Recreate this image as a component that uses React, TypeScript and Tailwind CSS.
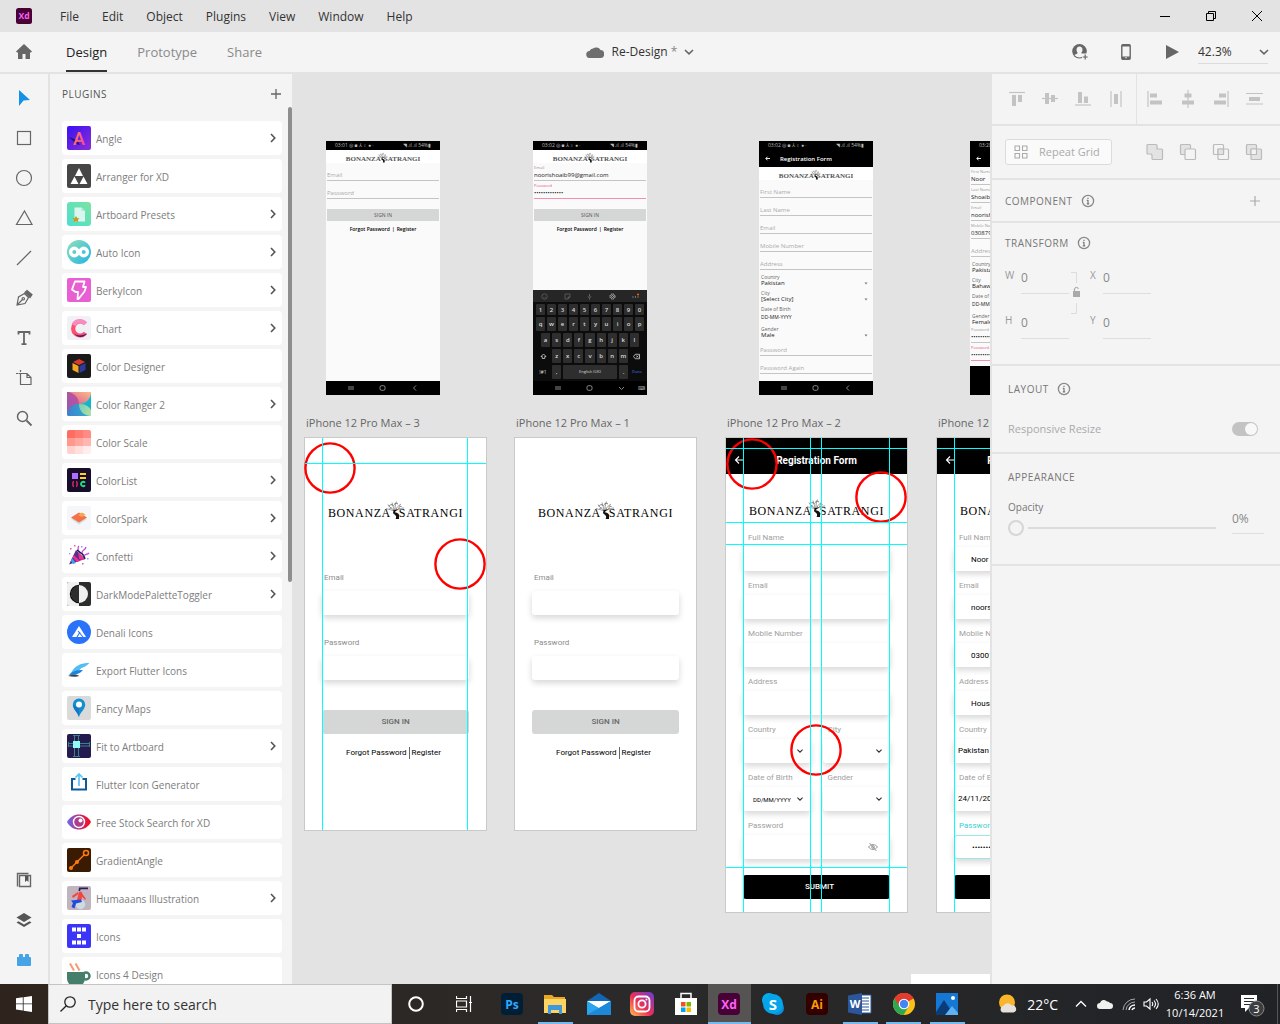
import { useId, useState } from 'react'
import type { ReactNode } from 'react'

const MENU = ['File', 'Edit', 'Object', 'Plugins', 'View', 'Window', 'Help']
const TABS = ['Design', 'Prototype', 'Share']

function Svg({ size = 24, box = 24, children }: { size?: number; box?: number; children: ReactNode }) {
  return (
    <svg width={size} height={size} viewBox={`0 0 ${box} ${box}`} fill="none" aria-hidden="true" className="shrink-0">
      {children}
    </svg>
  )
}

function Chevron({ className = '' }: { className?: string }) {
  return (
    <svg width="10" height="10" viewBox="0 0 10 10" fill="none" stroke="currentColor" strokeWidth="1.600" className={className} aria-hidden="true">
      <path d="M1 3l4 3.800L9 3" />
    </svg>
  )
}

/* ---------- plugin list ---------- */

interface Plugin {
  name: string
  more?: boolean
  icon: ReactNode
}

const PLUGINS: Plugin[] = [
  {
    name: 'Angle',
    more: true,
    icon: (
      <>
        <defs>
          <linearGradient id="angleBg" x1="0" y1="0" x2="1" y2="1">
            <stop stopColor="#3a10f5" />
            <stop offset="1" stopColor="#8b2fd6" />
          </linearGradient>
          <linearGradient id="angleA" x1="0" y1="0" x2="1" y2="1">
            <stop stopColor="#ff8a5c" />
            <stop offset="1" stopColor="#ff3f8e" />
          </linearGradient>
        </defs>
        <rect width="24" height="24" rx="2" fill="url(#angleBg)" />
        <path d="M2 11l8 3 3 5-4-1z" fill="#24107e" />
        <text x="12" y="18.500" textAnchor="middle" fontFamily="Roboto, sans-serif" fontSize="18" fontWeight="500" fill="url(#angleA)">A</text>
      </>
    ),
  },
  {
    name: 'Arranger for XD',
    icon: (
      <>
        <rect width="24" height="24" rx="2" fill="#464646" />
        <path d="M12 4l4 8H8zM7.500 12.500l4 7.500h-8zM16.500 12.500l4 7.500h-8z" fill="#fff" />
      </>
    ),
  },
  {
    name: 'Artboard Presets',
    more: true,
    icon: (
      <>
        <defs>
          <linearGradient id="presetBg" x1="1" y1="0" x2="0" y2="1">
            <stop stopColor="#7be3a0" />
            <stop offset="1" stopColor="#4cdfd0" />
          </linearGradient>
        </defs>
        <rect width="24" height="24" rx="3" fill="url(#presetBg)" />
        <path d="M7.500 5.500h7l3.500 3.500v10.500H7.500z" fill="#d9f7ee" />
        <path d="M14.500 5.500V9H18z" fill="#a9e8d6" />
        <path d="M9 14l1.200 2 2.300.4-1.600 1.600.3 2.200L9 19.200l-2.200 1 .3-2.200-1.600-1.600 2.300-.4z" fill="#c79a28" />
      </>
    ),
  },
  {
    name: 'Auto Icon',
    more: true,
    icon: (
      <>
        <defs>
          <linearGradient id="autoBg" x1="0" y1="0" x2="1" y2="1">
            <stop stopColor="#8fe0b8" />
            <stop offset="1" stopColor="#22b4e6" />
          </linearGradient>
        </defs>
        <circle cx="12" cy="12" r="12" fill="url(#autoBg)" />
        <circle cx="7.300" cy="12" r="3.700" stroke="#fff" strokeWidth="3.400" />
        <circle cx="16.700" cy="12" r="3.700" stroke="#fff" strokeWidth="3.400" />
      </>
    ),
  },
  {
    name: 'BerkyIcon',
    more: true,
    icon: (
      <>
        <rect width="24" height="24" rx="2" fill="#e85fd3" />
        <path d="M8 3.500h9.500L16 9h3l-1.500 4.500-6 7.500h-1l.5-7H8.500L5 11.500z" stroke="#fff" strokeWidth="1.800" strokeLinejoin="round" />
      </>
    ),
  },
  {
    name: 'Chart',
    more: true,
    icon: (
      <>
        <rect width="24" height="24" rx="3" fill="#eff1f4" />
        <path d="M18 7.500A7 7 0 1 0 18.500 17" stroke="#ff4f70" strokeWidth="4.200" />
        <path d="M18.500 8A7 7 0 0 0 6.500 9" stroke="#f78cbf" strokeWidth="4.200" />
        <path d="M7 17.500c3 2.500 8 2.500 13 0-3 4-9 5-13 0z" fill="#3d1a78" />
      </>
    ),
  },
  {
    name: 'Color Designer',
    icon: (
      <>
        <rect width="24" height="24" rx="2" fill="#1a1a1a" />
        <path d="M12 5l6 3-6 3-6-3z" fill="#d63a28" />
        <path d="M5.500 9l6 3v7l-6-3z" fill="#f5a623" />
        <path d="M18.500 9l-6 3v7l6-3z" fill="#2b3a9c" />
      </>
    ),
  },
  {
    name: 'Color Ranger 2',
    more: true,
    icon: (
      <>
        <defs>
          <linearGradient id="rangerTop" x1="0" y1="1" x2="1" y2="0">
            <stop stopColor="#e0568a" />
            <stop offset="1" stopColor="#f8bd8c" />
          </linearGradient>
          <linearGradient id="rangerLeft" x1="0" y1="1" x2="1" y2="0">
            <stop stopColor="#8f5bb0" />
            <stop offset="1" stopColor="#c9509a" />
          </linearGradient>
          <linearGradient id="rangerBottom">
            <stop stopColor="#3f7fd0" />
            <stop offset="1" stopColor="#2fb3c9" />
          </linearGradient>
          <linearGradient id="rangerRight" x1="0" y1="0" x2="1" y2="1">
            <stop stopColor="#5cc9c0" />
            <stop offset="1" stopColor="#b9e0a0" />
          </linearGradient>
        </defs>
        <rect width="24" height="24" rx="2" fill="#12b6cc" />
        <path d="M0 0h12v12C6 12 1 17 0 24z" fill="url(#rangerLeft)" />
        <path d="M2 0h22c0 7-5 12-12 12C12 6 8 2 2 0z" fill="url(#rangerTop)" />
        <path d="M0 22c1-6 6-10 12-10 0 6 4 11 12 12H2a2 2 0 0 1-2-2z" fill="url(#rangerBottom)" />
        <path d="M12 12c6 0 9-3 12-8v20c-7 0-12-5-12-12z" fill="url(#rangerRight)" />
        <path d="M24 4v14c-3-5-7-6-12-6 6 0 9-3 12-8z" fill="#12b6cc" />
      </>
    ),
  },
  {
    name: 'Color Scale',
    icon: (
      <>
        <path d="M0 2a2 2 0 0 1 2-2h6v8H0z" fill="#ff6c60" />
        <path d="M8 0h8v8H8z" fill="#ff7c72" />
        <path d="M16 0h6a2 2 0 0 1 2 2v6h-8z" fill="#ff8b82" />
        <path d="M0 8h8v8H0z" fill="#ff9990" />
        <path d="M8 8h8v8H8z" fill="#ffa8a0" />
        <path d="M16 8h8v8h-8z" fill="#ffb6b0" />
        <path d="M0 16h8v8H2a2 2 0 0 1-2-2z" fill="#ffd2ce" />
        <path d="M8 16h8v8H8z" fill="#ffe0de" />
        <path d="M16 16h8v6a2 2 0 0 1-2 2h-6z" fill="#ffeeed" />
      </>
    ),
  },
  {
    name: 'ColorList',
    more: true,
    icon: (
      <>
        <rect width="24" height="24" rx="2" fill="#180e2b" />
        <path d="M5 5h6v6H5z" fill="#b06cff" />
        <path d="M13 5h6v2h-6zM13 9h6v2h-6z" fill="#ffd21f" />
        <path d="M7 13.500c-1.500 0-1.500 5 0 5M9 13.500c1.500 0 1.500 5 0 5" stroke="#d02a5c" strokeWidth="1.500" />
        <path d="M18 14.700a2.200 2.200 0 1 0 0 2.600" stroke="#21e27c" strokeWidth="1.900" />
      </>
    ),
  },
  {
    name: 'ColorSpark',
    more: true,
    icon: (
      <>
        <rect width="24" height="24" rx="2" fill="#f4f6fa" />
        <path d="M4 13l8-4 8 4-8 5.500z" fill="#d9dde0" />
        <path d="M4 11.500l8-5 8 5-8 5z" fill="#f4704a" />
        <path d="M11 9l4-2.500 3.500 2L15 11z" fill="#f5a94a" />
      </>
    ),
  },
  {
    name: 'Confetti',
    more: true,
    icon: (
      <>
        <path d="M9 6l9 9L2 20.500z" fill="#5b2a8e" />
        <path d="M7 11l6 6-3 1-4.500-4.500zM9 6l2 2 1 7 3 1 3-1z" fill="#e8308c" />
        <path d="M5 14l4 5-3 1-2-3z" fill="#3da0f0" />
        <path d="M10 6c2 1 2 2 4 3s3 3 4 6" stroke="#1f1a4a" strokeWidth="1.500" />
        <path d="M11 6c1-2-1-3 1-4M15 9c0-4 3-2 4-6M17 12c1-2 3-1 5-3" stroke="#c34be0" strokeWidth="1.300" />
        <path d="M3 4h1.500v1.500H3zM7 1h1.500v1.500H7zM15 19h1.500v1.500H15z" fill="#f05aa0" />
        <path d="M14 2h1.500v1.500H14zM20 14h1.500v1.500H20zM2 9h1.300v1.300H2z" fill="#8aa0ff" />
      </>
    ),
  },
  {
    name: 'DarkModePaletteToggler',
    more: true,
    icon: (
      <>
        <rect width="24" height="24" rx="2" fill="#2d2d2d" />
        <path d="M2 0h10v24H2a2 2 0 0 1-2-2V2a2 2 0 0 1 2-2z" fill="#f0f0f0" />
        <path d="M12 4a8 8 0 0 0 0 16z" fill="#2d2d2d" />
        <path d="M12 3a9 9 0 0 1 0 18z" fill="#f0f0f0" />
        <path d="M12 3.500a8.500 8.500 0 0 0 0 17" stroke="#111" strokeWidth="1.500" />
      </>
    ),
  },
  {
    name: 'Denali Icons',
    icon: (
      <>
        <circle cx="12" cy="12" r="12" fill="#2a73f8" />
        <path d="M12 6l7 11H5z" fill="#fff" />
        <path d="M11 11l5 6M13 12l-3 5" stroke="#2a73f8" strokeWidth="1.100" />
      </>
    ),
  },
  {
    name: 'Export Flutter Icons',
    icon: (
      <>
        <path d="M22.500 5c-8 0-15 2-19 11l8-3 3-3c2-.5 4-1.500 8-5z" fill="#55bdf5" />
        <path d="M2 17c3-4 8-5 14-5-3 4-8 5-14 5z" fill="#1b86dc" />
        <path d="M1 18c5-2 9-2 11 0-2 1-7 1-11 0z" fill="#37474f" />
      </>
    ),
  },
  {
    name: 'Fancy Maps',
    icon: (
      <>
        <rect width="24" height="24" rx="2" fill="#dadada" />
        <path d="M12 2.500a6.200 6.200 0 0 1 6.200 6.200C18.200 13 13.500 16 12 21c-1.500-5-6.200-8-6.200-12.300A6.200 6.200 0 0 1 12 2.500z" fill="#128fd0" />
        <path d="M12 12v9c-1.500-5-6-8-6-12z" fill="#1675c8" />
        <circle cx="12" cy="8.500" r="3" fill="#fff" />
      </>
    ),
  },
  {
    name: 'Fit to Artboard',
    more: true,
    icon: (
      <>
        <rect width="24" height="24" rx="2" fill="#241b4e" />
        <path d="M6 1.500h7M6 22.500h7M1.500 8v5M22.500 8v5M7.500 2v20M11.500 2v20M2 9.500h20M2 12h20" stroke="#3b7f8c" />
        <rect x="6" y="7" width="7" height="7" fill="#93fbf5" />
      </>
    ),
  },
  {
    name: 'Flutter Icon Generator',
    icon: (
      <>
        <path d="M8.500 7H5v10.500h14V7h-3.500" stroke="#0a5a9c" strokeWidth="2" />
        <path d="M12 14V2.500M8.500 5.500L12 2l3.500 3.500" stroke="#5cc4f5" strokeWidth="1.700" />
      </>
    ),
  },
  {
    name: 'Free Stock Search for XD',
    icon: (
      <>
        <defs>
          <linearGradient id="eyeBg">
            <stop stopColor="#6b6bf0" />
            <stop offset=".5" stopColor="#b8307e" />
            <stop offset="1" stopColor="#ff0a14" />
          </linearGradient>
        </defs>
        <path d="M0 12c5-10 19-10 24 0-5 10-19 10-24 0z" fill="url(#eyeBg)" />
        <circle cx="12" cy="12" r="5.500" fill="#b13a8c" stroke="#fff" strokeWidth="1.400" />
        <circle cx="13.500" cy="10.500" r="2" fill="#fff" />
      </>
    ),
  },
  {
    name: 'GradientAngle',
    icon: (
      <>
        <rect width="24" height="24" rx="2" fill="#3b1a02" />
        <path d="M4 20L17.500 6.500" stroke="#ff7a0a" strokeWidth="1.400" />
        <circle cx="4" cy="20" r="2" fill="#ff7a0a" />
        <circle cx="10" cy="14" r="2" fill="#ff7a0a" />
        <circle cx="19" cy="5" r="2.500" stroke="#ff7a0a" strokeWidth="1.500" />
      </>
    ),
  },
  {
    name: 'Humaaans Illustration',
    more: true,
    icon: (
      <>
        <rect width="24" height="24" rx="2" fill="#c0b4bf" />
        <circle cx="13.500" cy="18.500" r="4.700" fill="#cfdbe2" />
        <path d="M12 1.500h2.500L13 5h-1.500zM14 1.500h7v1.800h-7z" fill="#2a1f5c" />
        <path d="M12 6c2-1 3 0 3.500 2l3.500 5-1 .7-3-3-.5 3.300H10z" fill="#f2453d" />
        <path d="M5 10l6-4 .5 2L6 12z" fill="#f2453d" />
        <path d="M4 14.500l10-1 1 2.500-6 1.500-1.500 5L4.500 21l1.500-4z" fill="#1f4be0" />
      </>
    ),
  },
  {
    name: 'Icons',
    icon: (
      <>
        <rect width="24" height="24" rx="2" fill="#3a35f8" />
        <path d="M5 3.500h4v4H5zM10 3.500h4v4h-4zM15 3.500h4v4h-4zM10 10h4v4h-4zM5 16.500h4v4H5zM10 16.500h4v4h-4zM15 16.500h4v4h-4z" fill="#fff" />
      </>
    ),
  },
  {
    name: 'Icons 4 Design',
    icon: (
      <>
        <path d="M3 1.500l4 7M8.500 1.500l4 7" stroke="#f59a72" strokeWidth="2" />
        <path d="M0 10h18v6c0 4-2 6-4 8H4c-2-2-4-4-4-8z" fill="#457f6c" />
        <circle cx="19" cy="14" r="3.500" stroke="#457f6c" strokeWidth="2.500" />
      </>
    ),
  },
]

function PluginsPanel() {
  return (
    <aside className="relative flex w-[242px] shrink-0 flex-col overflow-hidden bg-[#f4f4f4] pl-3">
      <div className="flex h-10 shrink-0 items-center justify-between pr-[10px]">
        <h2 className="text-[10px] tracking-wider text-[#555]">PLUGINS</h2>
        <button aria-label="Add plugin" className="text-[#666]">
          <Svg size={12} box={12}>
            <path d="M6 1v10M1 6h10" stroke="currentColor" strokeWidth="1.300" />
          </Svg>
        </button>
      </div>
      <ul className="flex min-h-0 flex-1 flex-col gap-1 overflow-hidden pr-[10px] pt-[7px]">
        {PLUGINS.map((p) => (
          <li key={p.name} className="shrink-0">
            <button className="flex h-[34px] w-full items-center rounded-sm bg-white pl-[5px] pr-1 text-left text-[10px] text-[#7d7d7d]">
              <Svg>{p.icon}</Svg>
              <span className="ml-[5px] flex-1 pt-[2px]">{p.name}</span>
              {p.more && <Chevron className="-rotate-90 text-[#555]" />}
            </button>
          </li>
        ))}
      </ul>
      <div className="absolute right-0 top-[33px] h-[475px] w-1 rounded-full bg-[#8e8e8e]" />
    </aside>
  )
}

/* ---------- left tool rail ---------- */

const TOOLS: { name: string; icon: ReactNode }[] = [
  { name: 'Select', icon: <path d="M7 4v16l4.500-5.500 6.500-.5z" fill="#1592e6" /> },
  { name: 'Rectangle', icon: <rect x="5.500" y="5.500" width="13" height="13" /> },
  { name: 'Ellipse', icon: <circle cx="12" cy="12" r="7.500" /> },
  { name: 'Polygon', icon: <path d="M12.500 5l7.500 13.500H4.500z" /> },
  { name: 'Line', icon: <path d="M5 19L19 5" /> },
  {
    name: 'Pen',
    icon: (
      <>
        <path d="M5 19l1.500-8 6-3.500 4 4L13 17.500zM5 19l5.500-5.500" />
        <circle cx="11.300" cy="12.700" r="1.200" />
        <path d="M13 6.500l2-2 5 4-2 3z" fill="#666" />
      </>
    ),
  },
  { name: 'Text', icon: <path d="M6.500 8.500V6h11v2.500M12 6v12M9.500 18.200h5" strokeWidth="1.800" /> },
  { name: 'Artboard', icon: <path d="M6.500 7.500h8.500l4 4v7H8.500v-11M15 7.500v4h4M4 7.500h2M8.500 4v2" /> },
  {
    name: 'Zoom',
    icon: (
      <>
        <circle cx="10.500" cy="10.500" r="5" strokeWidth="1.500" />
        <path d="M14.500 14.500l5 5" strokeWidth="1.800" />
      </>
    ),
  },
]

const PANELS: { name: string; icon: ReactNode }[] = [
  {
    name: 'Libraries',
    icon: (
      <>
        <path d="M7.500 7.500h11v11h-11z" strokeWidth="1.400" />
        <path d="M5.500 18.500v-13h11" strokeWidth="1.400" />
        <path d="M13 8h3.500v6l-1.700-1.500L13 14z" fill="#555" stroke="none" />
      </>
    ),
  },
  {
    name: 'Layers',
    icon: (
      <g fill="#555" stroke="none">
        <path d="M12 5l7.500 4.500L12 14 4.500 9.500z" />
        <path d="M4.500 14.500l2-1.200 5.500 3.300 5.500-3.300 2 1.200L12 19z" />
      </g>
    ),
  },
  {
    name: 'Plugins',
    icon: <path d="M5 9h2V7q0-1 1-1h2q1 0 1 1v2h2V7q0-1 1-1h2q1 0 1 1v2h1q1 0 1 1v7q0 1-1 1H6q-1 0-1-1z" fill="#45a3e6" stroke="none" />,
  },
]

function ToolRail() {
  return (
    <nav aria-label="Tools" className="flex w-[50px] shrink-0 flex-col justify-between border-r-2 border-[#e3e3e3] bg-[#f4f4f4] py-1">
      {[TOOLS, PANELS].map((group, i) => (
        <div key={i} className="flex flex-col">
          {group.map((t) => (
            <button key={t.name} aria-label={t.name} className="flex h-10 w-12 items-center justify-center">
              <Svg>
                <g stroke={t.name === 'Select' ? 'none' : '#666'} strokeWidth="1.200">
                  {t.icon}
                </g>
              </Svg>
            </button>
          ))}
        </div>
      ))}
    </nav>
  )
}

/* ---------- canvas ---------- */

function Tree({ size }: { size: number }) {
  return (
    <svg width={size} height={size} viewBox="0 0 20 20" fill="none" stroke="#555" strokeWidth=".6" className="shrink-0" aria-hidden="true">
      <path d="M8 10.500C4 9 2.500 9.500 1 8.500M8.500 10C6 7.500 4 7 3 4.500M9 9.500C8 6 7.500 4 7 2.500M10 9.500c0-4 .5-6 1.500-8M11 9.500c1-3 3-4 5-5.500M12 10c3-1 4-2 7-2" />
      <path d="M4 6.500l1.500-2M6 4.500l2.500 1M9 4.500L11 3l2 1M14 6l2.500.5M4.500 8.500l2-.7M13 8.300l2-.3" strokeWidth="1" stroke="#777" />
      <path d="M8 9.800c2 .2 4-.3 5-.8-.5 1.500-2.800 2-3.300 3.300 1.800.2 3.800 1 4.300 2.500V19h-3.500c.8-1 .8-2 .3-3.200-.8-1.500-2.300-1.500-2.800-2.800 0-1.300 1-1.700 0-3.200z" fill="#111" stroke="none" />
    </svg>
  )
}

function Logo() {
  return (
    <div className="flex h-5 items-end justify-center font-['Liberation_Serif',serif] text-[12px] leading-[14px] tracking-wider text-black">
      <span>BONANZA</span>
      <span className="-mx-[6px]">
        <Tree size={20} />
      </span>
      <span>SATRANGI</span>
    </div>
  )
}

function SmallLogo() {
  return (
    <div className="flex h-[13px] shrink-0 items-end justify-center bg-white font-['Liberation_Serif',serif] text-[7px] font-bold leading-[7px] text-[#555]">
      <span>BONANZA</span>
      <span className="-mx-[4px]">
        <Tree size={11} />
      </span>
      <span>SATRANGI</span>
    </div>
  )
}

function StatusBar({ time }: { time: string }) {
  return (
    <div className="flex h-[9px] shrink-0 items-center justify-between bg-black px-[9px] text-[5px] leading-none text-[#bbb]">
      <span className="whitespace-nowrap">{time} ◎ ■ ⅄ ♀ ● ·</span>
      <span className="whitespace-nowrap">◥ .ıl .ıl 54%▮</span>
    </div>
  )
}

function PhoneNav({ keyboard }: { keyboard?: boolean }) {
  return (
    <div className="flex h-[14px] shrink-0 items-center justify-between bg-black px-[22px] text-[#aaa]">
      <svg width="70" height="8" viewBox="0 0 70 8" fill="none" stroke="currentColor" strokeWidth=".8" aria-hidden="true">
        <path d="M1 2v4M3 2v4M5 2v4" />
        <rect x="32" y="1.700" width="5" height="4.600" rx="1.500" />
        {keyboard ? <path d="M64 3l2.500 2.500L69 3" /> : <path d="M68 1.500L65.500 4 68 6.500" />}
      </svg>
      {keyboard && <span className="-mr-[20px] text-[5px] leading-none">⌨</span>}
    </div>
  )
}

interface PhoneFieldProps {
  label: string
  value?: string
  type?: string
  active?: boolean
}

function PhoneField({ label, value, type = 'text', active }: PhoneFieldProps) {
  const id = useId()
  return (
    <div className="flex h-[18px] shrink-0 flex-col justify-end px-px">
      {value && (
        <label htmlFor={id} className={`text-[4px] leading-[6px] ${active ? 'text-[#e8558d]' : 'text-[#999]'}`}>
          {label}
        </label>
      )}
      <input
        id={id}
        type={type}
        defaultValue={value}
        placeholder={value ? undefined : label}
        aria-label={label}
        className={`h-[10px] w-full border-b pb-px text-[6px] leading-none text-[#222] outline-none placeholder:text-[#aaa] ${active ? 'border-[#f48fb1]' : 'border-[#c4c4c4]'}`}
      />
    </div>
  )
}

function PhoneSelect({ label, value }: { label: string; value: string }) {
  const id = useId()
  return (
    <div className="flex shrink-0 flex-col pl-[2px] pr-1">
      <label htmlFor={id} className="text-[5px] leading-[6px] text-[#666]">{label}</label>
      <div className="flex h-[6px] items-center">
        <select id={id} className="h-[8px] flex-1 appearance-none text-[6px] leading-none text-[#222]">
          <option>{value}</option>
        </select>
        <svg width="4" height="3" viewBox="0 0 4 3" className="mr-px" aria-hidden="true"><path d="M.5.5h3L2 2.500z" fill="#777" /></svg>
      </div>
    </div>
  )
}

function PhoneDate() {
  const id = useId()
  return (
    <div className="flex shrink-0 flex-col pl-[2px] pr-1">
      <label htmlFor={id} className="text-[5px] leading-[6px] text-[#666]">Date of Birth</label>
      <input id={id} defaultValue="DD-MM-YYYY" className="h-[10px] w-full text-[5px] leading-none text-[#222] outline-none" />
    </div>
  )
}

function PhoneSignInActions() {
  return (
    <>
      <div className="mt-[10px] flex px-px">
        <button className="h-[12px] flex-1 bg-[#d5d7d6] text-[5px] leading-none text-[#555]">SIGN IN</button>
      </div>
      <div className="flex h-[16px] items-center justify-center gap-[2px] text-[5px] font-semibold leading-none text-black">
        <a href="#forgot">Forgot Password</a>
        <span>|</span>
        <a href="#register">Register</a>
      </div>
    </>
  )
}

const KEY = 'rounded-[1px] bg-[#2e2e2e] text-[6px] leading-none font-semibold text-[#ddd]'

function Keyboard() {
  return (
    <div className="flex h-[91px] shrink-0 flex-col gap-[2px] bg-[#0c0c0c] px-[3px]">
      <div className="-mx-[3px] flex h-[12px] items-center justify-around bg-[#262626] text-[#666]">
        <Svg size={7} box={14}><circle cx="7" cy="7" r="5.500" stroke="currentColor" strokeWidth="1.500" /><path d="M4.500 8q2.500 3 5 0" stroke="currentColor" /></Svg>
        <Svg size={7} box={14}><path d="M2 2h10v6l-4 4H2zM8 12V8h4" stroke="currentColor" strokeWidth="1.500" /></Svg>
        <Svg size={7} box={14}><path d="M7 2v5M3.500 7q3.500 5 7 0M7 10v3" stroke="currentColor" strokeWidth="2" /></Svg>
        <Svg size={7} box={14}><circle cx="7" cy="7" r="5" stroke="#ccc" strokeWidth="2" strokeDasharray="3 1" /><circle cx="7" cy="7" r="2" stroke="#ccc" strokeWidth="1.500" /></Svg>
        <Svg size={7} box={14}><path d="M1 8h2M6 8h2M11 8h2" stroke="#bbb" strokeWidth="2" /><circle cx="12" cy="3" r="2" fill="#f60" /></Svg>
      </div>
      <div className="grid h-[11px] grid-cols-10 gap-[2px]">
        {[...'1234567890'].map((k) => <button key={k} className={KEY}>{k}</button>)}
      </div>
      <div className="grid h-[14px] grid-cols-10 gap-[2px]">
        {[...'qwertyuiop'].map((k) => <button key={k} className={KEY}>{k}</button>)}
      </div>
      <div className="grid h-[14px] grid-cols-9 gap-[2px] px-[5px]">
        {[...'asdfghjkl'].map((k) => <button key={k} className={KEY}>{k}</button>)}
      </div>
      <div className="flex h-[14px] gap-[2px]">
        <button aria-label="Shift" className="flex w-[14px] items-center justify-center">
          <Svg size={7} box={14}><path d="M7 2l5 5H9.500v4h-5V7H2z" stroke="#ddd" strokeWidth="1.500" /></Svg>
        </button>
        {[...'zxcvbnm'].map((k) => <button key={k} className={`flex-1 ${KEY}`}>{k}</button>)}
        <button aria-label="Backspace" className="flex w-[14px] items-center justify-center">
          <Svg size={7} box={14}><path d="M1 7l3.500-4.500H13v9H4.500zM6.500 5l4 4M10.500 5l-4 4" stroke="#ddd" strokeWidth="1.500" /></Svg>
        </button>
      </div>
      <div className="flex h-[14px] gap-[2px]">
        <button className="w-[14px] text-[5px] leading-none text-[#ddd]">!#1</button>
        <button className={`w-[9px] ${KEY}`}>,</button>
        <button className="flex-1 rounded-[1px] bg-[#2e2e2e] text-[4px] leading-none text-[#ddd]">English (UK)</button>
        <button className={`w-[9px] ${KEY}`}>.</button>
        <button className="w-[14px] text-[4px] leading-none text-[#3b82f6]">Done</button>
      </div>
    </div>
  )
}

function PhoneHeader() {
  return (
    <div className="flex h-[17px] shrink-0 items-center bg-black px-[6px] text-[6px] font-semibold leading-none text-white">
      <svg width="5" height="5" viewBox="0 0 5 5" fill="none" stroke="#fff" className="mr-[10px] shrink-0" aria-hidden="true"><path d="M5 2.500H1M2.500.7L.8 2.500l1.700 1.800" strokeWidth=".9" /></svg>
      <span className="whitespace-nowrap">Registration Form</span>
    </div>
  )
}

function Phone({ className, children }: { className: string; children: ReactNode }) {
  return (
    <div className={`absolute top-[67px] flex h-[254px] w-[114px] flex-col overflow-hidden bg-[#fafafa] ${className}`}>
      {children}
    </div>
  )
}

interface ArtboardProps {
  name: string
  className: string
  boardClassName: string
  children: ReactNode
}

function Artboard({ name, className, boardClassName, children }: ArtboardProps) {
  return (
    <section className={`absolute top-[342px] flex w-[183px] flex-col gap-[7px] ${className}`}>
      <h3 className="whitespace-nowrap pl-[2px] text-[11px] leading-[14px] text-[#666]">{name}</h3>
      <div className={`relative flex flex-col border border-[#c9c9c9] bg-white font-['Roboto',sans-serif] ${boardClassName}`}>{children}</div>
    </section>
  )
}

function Guides({ x = [], y = [] }: { x?: number[]; y?: number[] }) {
  return (
    <div className="pointer-events-none absolute inset-0">
      {x.map((v) => <div key={`x${v}`} className="absolute inset-y-0 w-px bg-[#00ffff]" style={{ left: v }} />)}
      {y.map((v) => <div key={`y${v}`} className="absolute inset-x-0 h-px bg-[#00ffff]" style={{ top: v }} />)}
    </div>
  )
}

function Ring({ className }: { className: string }) {
  return (
    <svg width="52" height="52" viewBox="0 0 52 52" fill="none" className={`pointer-events-none absolute ${className}`} aria-hidden="true">
      <circle cx="26" cy="26" r="24.600" stroke="#f00" strokeWidth="2.400" />
    </svg>
  )
}

const SHADOW = 'shadow-[0_3px_6px_rgba(0,0,0,0.16)]'

function SignInBoard() {
  const id = useId()
  return (
    <div className="flex flex-col px-[17px] pt-[62px]">
      <Logo />
      <label htmlFor={`${id}e`} className="mt-[50px] pl-[2px] text-[8px] leading-4 text-[#8c8c8c]">Email</label>
      <input id={`${id}e`} type="email" className={`mt-[5px] h-6 rounded-[3px] bg-white outline-none ${SHADOW}`} />
      <label htmlFor={`${id}p`} className="mt-5 pl-[2px] text-[8px] leading-4 text-[#8c8c8c]">Password</label>
      <input id={`${id}p`} type="password" className={`mt-[5px] h-6 rounded-[3px] bg-white outline-none ${SHADOW}`} />
      <button className="mt-[30px] h-6 rounded-[3px] bg-[#d5d7d6] text-[8px] font-medium text-[#666]">SIGN IN</button>
      <div className="mt-[13px] flex items-center justify-center gap-[2px] pr-1 text-[8px] leading-3 text-black">
        <a href="#forgot">Forgot Password</a>
        <span className="h-3 w-px bg-[#666]" />
        <a href="#register">Register</a>
      </div>
    </div>
  )
}

interface BoardFieldProps {
  label: string
  value?: string
  type?: string
  select?: boolean
  small?: boolean
  active?: boolean
}

function BoardField({ label, value, type = 'text', select, small, active }: BoardFieldProps) {
  const id = useId()
  return (
    <div className="flex min-w-0 flex-col gap-px">
      <label htmlFor={id} className={`pl-[5px] pt-px text-[8px] leading-4 ${active ? 'text-[#3ccfcf]' : 'text-[#a0a0a0]'}`}>{label}</label>
      <div className={`flex h-6 items-center rounded-[3px] bg-white pr-[8px] ${SHADOW} ${active ? 'border border-[#a0e4e4]' : ''}`}>
        {select ? (
          <select id={id} className={`h-full min-w-0 flex-1 appearance-none text-black outline-none ${small ? 'pl-[10px] text-[6px]' : 'pl-[4px] text-[8px]'}`}>
            <option>{value}</option>
          </select>
        ) : (
          <input id={id} type={type} defaultValue={value} className="h-full min-w-0 flex-1 pl-[17px] text-[8px] text-black outline-none" />
        )}
        {select && (
          <svg width="6" height="6" viewBox="0 0 6 6" fill="none" stroke="#333" strokeWidth="1.100" className="shrink-0" aria-hidden="true"><path d="M.4 1.600L3 4.200l2.600-2.600" /></svg>
        )}
        {type === 'password' && !value && (
          <svg width="10" height="10" viewBox="0 0 10 10" fill="none" stroke="#999" className="mr-1 shrink-0" aria-hidden="true">
            <path d="M.6 5C2.500 1.800 7.500 1.800 9.400 5 7.500 8.200 2.500 8.200.6 5zM1.500 1l7 8" />
            <circle cx="5" cy="5" r="1.300" />
          </svg>
        )}
      </div>
    </div>
  )
}

interface Person {
  name?: string
  email?: string
  mobile?: string
  address?: string
  country?: string
  birth?: string
  password?: string
}

function RegistrationBoard({ person = {} }: { person?: Person }) {
  return (
    <>
      <div className="flex h-9 shrink-0 items-center bg-black pt-[8px] text-[10px] font-bold text-white">
        <button aria-label="Back" className="flex w-[26px] justify-center">
          <svg width="10" height="10" viewBox="0 0 10 10" fill="none" stroke="#fff" strokeWidth="1.100" aria-hidden="true"><path d="M9 5H1.500M5 1.500L1.500 5 5 8.500" /></svg>
        </button>
        <h4 className="flex-1 pr-[26px] pt-[2px] text-center leading-none">Registration Form</h4>
      </div>
      <div className="flex flex-col gap-[6px] px-[17px] pt-[24px]">
        <div className="mb-[5px]">
          <Logo />
        </div>
        <BoardField label="Full Name" value={person.name} />
        <BoardField label="Email" type="email" value={person.email} />
        <BoardField label="Mobile Number" type="tel" value={person.mobile} />
        <BoardField label="Address" value={person.address} />
        <div className="grid grid-cols-2 gap-3">
          <BoardField label="Country" select value={person.country} />
          <BoardField label="City" select />
        </div>
        <div className="grid grid-cols-2 gap-3">
          <BoardField label="Date of Birth" select small={!person.birth} value={person.birth ?? 'DD/MM/YYYY'} />
          <BoardField label="Gender" select />
        </div>
        <BoardField label="Password" type="password" value={person.password} active={!!person.password} />
        <button className="mt-[10px] h-6 rounded-[3px] bg-black pl-[6px] text-[8px] font-medium text-white">SUBMIT</button>
      </div>
    </>
  )
}

function Canvas() {
  return (
    <main className="relative min-w-0 flex-1 overflow-hidden bg-[#e3e3e3]">
      <Phone className="left-[34px]">
        <StatusBar time="03:01" />
        <SmallLogo />
        <PhoneField label="Email" />
        <PhoneField label="Password" />
        <PhoneSignInActions />
        <div className="flex-1" />
        <PhoneNav />
      </Phone>
      <Phone className="left-[241px]">
        <StatusBar time="03:02" />
        <SmallLogo />
        <PhoneField label="Email" value="noorishoaib99@gmail.com" />
        <PhoneField label="Password" type="password" value="noorishoaib12" active />
        <PhoneSignInActions />
        <div className="flex-1" />
        <Keyboard />
        <PhoneNav keyboard />
      </Phone>
      <Phone className="left-[467px]">
        <StatusBar time="03:02" />
        <PhoneHeader />
        <SmallLogo />
        {['First Name', 'Last Name', 'Email', 'Mobile Number', 'Address'].map((f) => <PhoneField key={f} label={f} />)}
        <div className="mt-1 flex flex-col gap-1">
          <PhoneSelect label="Country" value="Pakistan" />
          <PhoneSelect label="City" value="[Select City]" />
          <PhoneDate />
          <PhoneSelect label="Gender" value="Male" />
        </div>
        <PhoneField label="Password" />
        <PhoneField label="Password Again" />
        <div className="flex-1" />
        <PhoneNav />
      </Phone>
      <Phone className="left-[678px]">
        <StatusBar time="03:28" />
        <PhoneHeader />
        <PhoneField label="First Name" value="Noor" />
        <PhoneField label="Last Name" value="Shoaib" />
        <PhoneField label="Email" value="noorishoaib99@gmail.com" />
        <PhoneField label="Mobile Number" value="03087912345" />
        <PhoneField label="Address" />
        <div className="mt-1 flex flex-col gap-1">
          <PhoneSelect label="Country" value="Pakistan" />
          <PhoneSelect label="City" value="Bahawalpur" />
          <PhoneDate />
          <PhoneSelect label="Gender" value="Female" />
        </div>
        <PhoneField label="Password" type="password" value="noorishoaib12" />
        <PhoneField label="Password Again" type="password" value="noorishoaib12" active />
        <div className="mt-[5px] flex-1 bg-black" />
      </Phone>

      <Artboard name="iPhone 12 Pro Max – 3" className="left-[12px]" boardClassName="h-[394px]">
        <SignInBoard />
        <Ring className="-left-px top-1" />
        <Ring className="left-[129px] top-[100px]" />
        <Guides x={[17, 162]} y={[25]} />
      </Artboard>
      <Artboard name="iPhone 12 Pro Max – 1" className="left-[222px]" boardClassName="h-[394px]">
        <SignInBoard />
      </Artboard>
      <Artboard name="iPhone 12 Pro Max – 2" className="left-[433px]" boardClassName="h-[476px]">
        <RegistrationBoard />
        <Ring className="left-0 top-0" />
        <Ring className="left-[129px] top-[33px]" />
        <Ring className="left-[64px] top-[286px]" />
        <Guides x={[17, 84, 95, 163]} y={[10, 84, 106, 429]} />
      </Artboard>
      <Artboard name="iPhone 12 Pro Max – 4" className="left-[644px]" boardClassName="h-[476px]">
        <RegistrationBoard
          person={{
            name: 'Noor Shoaib',
            email: 'noorshoaib@gmail.com',
            mobile: '03001234567',
            address: 'House No 12',
            country: 'Pakistan',
            birth: '24/11/2000',
            password: 'noorshoaib',
          }}
        />
        <Guides x={[17]} y={[10]} />
      </Artboard>
      <div className="absolute left-[619px] top-[900px] h-[200px] w-[183px] bg-white" />
    </main>
  )
}

/* ---------- property inspector ---------- */

const ALIGN_LEFT: { name: string; icon: ReactNode }[] = [
  { name: 'Align top', icon: <><path d="M2 3.500h16" /><path d="M7 6v11M13 6v7" strokeWidth="4" /></> },
  { name: 'Align middle', icon: <><path d="M2 9.500h16" /><path d="M7 4v11M13 6v7" strokeWidth="4" /></> },
  { name: 'Align bottom', icon: <><path d="M2 16h16" /><path d="M7 3v11M13 7.500V14" strokeWidth="4" /></> },
  { name: 'Distribute horizontally', icon: <><path d="M5 2v16M15 2v16" /><path d="M10 5v10" strokeWidth="4" /></> },
]

const ALIGN_RIGHT: { name: string; icon: ReactNode }[] = [
  { name: 'Align left', icon: <><path d="M3 2v16" /><path d="M5 6.500h7M5 13.500h12" strokeWidth="4" /></> },
  { name: 'Align center', icon: <><path d="M10 1v18" /><path d="M6.500 6.500h7M4 13.500h12" strokeWidth="4" /></> },
  { name: 'Align right', icon: <><path d="M17 2v16" /><path d="M8 6.500h7M3 13.500h12" strokeWidth="4" /></> },
  { name: 'Distribute vertically', icon: <><path d="M2 4.500h17M2 15h17" /><path d="M5 10h11" strokeWidth="4" /></> },
]

const BOOLEANS: { name: string; icon: ReactNode }[] = [
  { name: 'Add', icon: <path d="M3 2.500h8q1 0 1 1V7h4.500q1 0 1 1v8.500q0 1-1 1H8q-1 0-1-1V13L6 12H3q-1 0-1-1V3.500q0-1 1-1z" fill="#e3e3e3" /> },
  { name: 'Subtract', icon: <><rect x="2.500" y="2.500" width="10" height="10" rx="1" fill="#e3e3e3" /><rect x="7" y="7" width="10.500" height="10.500" rx="1" fill="#f4f4f4" /></> },
  { name: 'Intersect', icon: <><rect x="2.500" y="2.500" width="10" height="10" rx="1" /><rect x="7" y="7" width="10.500" height="10.500" rx="1" /><path d="M7 7h5.500v5.500H7z" fill="#e3e3e3" /></> },
  { name: 'Exclude overlap', icon: <><rect x="2.500" y="2.500" width="10" height="10" rx="1" fill="#e3e3e3" /><rect x="7" y="7" width="10.500" height="10.500" rx="1" fill="#e3e3e3" /><path d="M7 7h5.500v5.500H7z" fill="#f4f4f4" /></> },
]

function IconButtons({ items, className }: { items: { name: string; icon: ReactNode }[]; className: string }) {
  return (
    <div className="flex">
      {items.map((it) => (
        <button key={it.name} aria-label={it.name} className="flex w-[33px] justify-center">
          <Svg size={20} box={20}>
            <g className={className} strokeWidth="1.200">{it.icon}</g>
          </Svg>
        </button>
      ))}
    </div>
  )
}

function Info() {
  return (
    <Svg size={14} box={14}>
      <circle cx="7" cy="7" r="5.600" stroke="#888" strokeWidth="1.300" />
      <path d="M7 6v4M5.800 6.300H7M5.800 9.800h2.400M7 3.700v1.400" stroke="#777" strokeWidth="1.200" />
    </Svg>
  )
}

function SectionTitle({ children, info }: { children: string; info?: boolean }) {
  return (
    <div className="flex h-5 items-center gap-2">
      <h2 className="pt-px text-[10px] tracking-wider text-[#777]">{children}</h2>
      {info && <Info />}
    </div>
  )
}

function NumberField({ label, labelClassName }: { label: string; labelClassName: string }) {
  const id = useId()
  return (
    <div className="flex h-[27px]">
      <label htmlFor={id} className={`text-[10px] leading-4 text-[#999] ${labelClassName}`}>{label}</label>
      <input id={id} defaultValue="0" className="w-12 border-b border-[#dedede] pb-1 text-[12px] text-[#888] outline-none" />
    </div>
  )
}

function Inspector() {
  const [resize, setResize] = useState(true)
  const [opacity, setOpacity] = useState(0)
  const section = 'shrink-0 border-b-2 border-[#e3e3e3]'
  return (
    <aside className="flex w-[290px] shrink-0 flex-col border-l-2 border-[#e3e3e3] bg-[#f4f4f4]">
      <div className={`flex h-[52px] ${section}`}>
        <div className="flex w-[145px] items-center border-r border-[#e3e3e3] pl-2">
          <IconButtons items={ALIGN_LEFT} className="stroke-[#c3c3c3]" />
        </div>
        <div className="flex items-center pl-px">
          <IconButtons items={ALIGN_RIGHT} className="stroke-[#c3c3c3]" />
        </div>
      </div>
      <div className={`flex h-[54px] items-center justify-between pl-[13px] pr-[10px] ${section}`}>
        <button className="flex h-[26px] w-[107px] items-center gap-[11px] rounded-[3px] border border-[#dcdcdc] bg-[#fafafa] pl-2 text-[11px] text-[#aaa]">
          <Svg size={14} box={14}>
            <path d="M1 1h4.500v4.500H1zM8.500 1H13v4.500H8.500zM1 8.500h4.500V13H1zM8.500 8.500H13V13H8.500z" stroke="#aaa" strokeWidth="1.100" />
          </Svg>
          Repeat Grid
        </button>
        <IconButtons items={BOOLEANS} className="stroke-[#bbb]" />
      </div>
      <div className={`flex h-[43px] items-center justify-between pl-[13px] pr-[19px] ${section}`}>
        <SectionTitle info>COMPONENT</SectionTitle>
        <button aria-label="Make component">
          <Svg size={12} box={12}>
            <path d="M6 1v10M1 6h10" stroke="#aaa" strokeWidth="1.200" />
          </Svg>
        </button>
      </div>
      <div className={`flex h-[143px] flex-col gap-[14px] pl-[13px] pt-[10px] ${section}`}>
        <SectionTitle info>TRANSFORM</SectionTitle>
        <div className="flex">
          <div className="flex flex-col gap-[18px]">
            <NumberField label="W" labelClassName="w-4" />
            <NumberField label="H" labelClassName="w-4" />
          </div>
          <svg width="21" height="46" viewBox="0 0 21 46" fill="none" className="mt-1" aria-hidden="true">
            <path d="M2 1.500h5.500V12M2 42.500h5.500V32" stroke="#dcdcdc" />
            <path d="M4 20h7v6H4z" fill="#aaa" />
            <path d="M5.500 20v-2q2-3.500 4 0" stroke="#aaa" strokeWidth="1.200" />
          </svg>
          <div className="flex flex-col gap-[18px]">
            <NumberField label="X" labelClassName="w-[13px]" />
            <NumberField label="Y" labelClassName="w-[13px]" />
          </div>
        </div>
      </div>
      <div className={`flex h-[88px] flex-col gap-5 pl-4 pr-[22px] pt-[13px] ${section}`}>
        <SectionTitle info>LAYOUT</SectionTitle>
        <label className="flex h-5 items-center justify-between text-[11px] text-[#aaa]">
          Responsive Resize
          <input
            type="checkbox"
            role="switch"
            checked={resize}
            onChange={(e) => setResize(e.target.checked)}
            className="flex h-[14px] w-[26px] appearance-none items-center rounded-full bg-[#c3c3c3] px-px before:size-3 before:rounded-full before:bg-[#f8f8f8] checked:justify-end"
          />
        </label>
      </div>
      <div className={`flex h-[112px] flex-col gap-3 pl-4 pr-4 pt-[13px] ${section}`}>
        <SectionTitle>APPEARANCE</SectionTitle>
        <div className="flex gap-4">
          <div className="flex flex-1 flex-col gap-[5px]">
            <label htmlFor="opacity" className="text-[10px] leading-4 text-[#777]">Opacity</label>
            <input
              id="opacity"
              type="range"
              value={opacity}
              onChange={(e) => setOpacity(Number(e.target.value))}
              className="h-4 w-full appearance-none bg-transparent [&::-webkit-slider-runnable-track]:h-[2px] [&::-webkit-slider-runnable-track]:bg-[#dcdcdc] [&::-webkit-slider-thumb]:-mt-[7px] [&::-webkit-slider-thumb]:size-4 [&::-webkit-slider-thumb]:appearance-none [&::-webkit-slider-thumb]:rounded-full [&::-webkit-slider-thumb]:border-2 [&::-webkit-slider-thumb]:border-[#d6d6d6] [&::-webkit-slider-thumb]:bg-[#f4f4f4] [&::-webkit-slider-thumb]:shadow-[0_0_0_4px_#f4f4f4]"
            />
          </div>
          <input aria-label="Opacity value" value={`${opacity}%`} readOnly className="mt-2 h-[27px] w-8 border-b border-[#dedede] pb-1 text-[12px] text-[#888] outline-none" />
        </div>
      </div>
    </aside>
  )
}

/* ---------- window chrome ---------- */

function TitleBar() {
  return (
    <header className="flex h-8 shrink-0 items-center bg-[#e3e3e3] pl-4 text-[12px] text-[#333]">
      <svg width="16" height="16" viewBox="0 0 16 16" aria-hidden="true">
        <rect width="16" height="16" rx="2.500" fill="#470137" />
        <text x="8" y="11" textAnchor="middle" fontFamily="Open Sans, sans-serif" fontSize="8.500" fontWeight="700" fill="#ff61f6">Xd</text>
      </svg>
      <nav className="ml-7 flex flex-1 gap-[23px] pt-[2px]">
        {MENU.map((m) => <button key={m}>{m}</button>)}
      </nav>
      <button aria-label="Minimize" className="flex w-[46px] justify-center">
        <Svg size={10} box={10}><path d="M0 5.500h10" stroke="#000" /></Svg>
      </button>
      <button aria-label="Restore" className="flex w-[46px] justify-center">
        <Svg size={10} box={10}><path d="M.5 2.500h7v7h-7zM2.500 2.500v-2h7v7h-2" stroke="#000" /></Svg>
      </button>
      <button aria-label="Close" className="flex w-[46px] justify-center">
        <Svg size={10} box={10}><path d="M0 0l10 10M10 0L0 10" stroke="#000" /></Svg>
      </button>
    </header>
  )
}

function Toolbar() {
  return (
    <div className="grid h-[42px] shrink-0 grid-cols-[1fr_auto_1fr] border-b-2 border-[#e3e3e3] bg-[#f4f4f4] text-[#666]">
      <div className="flex">
        <button aria-label="Home" className="flex w-12 items-center justify-center">
          <Svg size={16} box={16}><path d="M8 0l8 7.500-1 1h-1V15h-4.500v-5h-3v5H2V8.500H1l-1-1z" fill="#666" /></Svg>
        </button>
        <nav className="ml-[18px] flex gap-[30px] text-[13px]">
          {TABS.map((t) => (
            <button key={t} className={t === 'Design' ? 'border-b-2 border-[#333] pt-1 text-[#222]' : 'border-b-2 border-transparent pt-1 text-[#8a8a8a]'}>
              {t}
            </button>
          ))}
        </nav>
      </div>
      <button className="flex items-center gap-2 text-[12px] text-[#333]">
        <svg width="18" height="12" viewBox="0 0 18 12" aria-hidden="true"><path d="M4 12a3.500 3.500 0 0 1-.5-7A4 4 0 0 1 7 2.500 5 5 0 0 1 14.500 4 4 4 0 0 1 14 12z" fill="#6e6e6e" /></svg>
        <span>Re-Design <span className="text-[#888]">*</span></span>
        <Chevron className="-ml-px text-[#666]" />
      </button>
      <div className="flex items-center justify-end pr-3">
        <button aria-label="Invite" className="mr-[33px]">
          <Svg size={16} box={16}>
            <circle cx="7.500" cy="7.300" r="7.300" fill="#666" />
            <path d="M7.500 2.500c2 0 3 1.400 3 3.200 0 1.500-.6 2.300-1.200 3 0 1.200 2.200 1.300 3.200 2.300-1 1.500-3 2.500-5 2.500s-4-1-5-2.500c1-1 3.200-1.100 3.200-2.300-.6-.7-1.200-1.500-1.200-3 0-1.800 1-3.200 3-3.200z" fill="#f4f4f4" />
            <path d="M10 9.500h6V16h-6z" fill="#f4f4f4" />
            <path d="M13.200 10.500v5M10.700 13h5" stroke="#666" strokeWidth="1.200" />
          </Svg>
        </button>
        <button aria-label="Preview on device" className="mr-[35px]">
          <svg width="10" height="16" viewBox="0 0 10 16" fill="none" aria-hidden="true"><rect x=".8" y=".8" width="8.400" height="14.400" rx="1" stroke="#666" strokeWidth="1.400" /><path d="M1 1h8v1.500H1zM1 12.500h8V15H1z" fill="#666" /><circle cx="5" cy="13.800" r=".7" fill="#fff" /></svg>
        </button>
        <button aria-label="Play" className="mr-[19px]">
          <svg width="13" height="14" viewBox="0 0 13 14" aria-hidden="true"><path d="M0 0l13 7-13 7z" fill="#666" /></svg>
        </button>
        <div className="flex h-6 w-[70px] items-center border-b border-[#dcdcdc]">
          <select aria-label="Zoom level" className="min-w-0 flex-1 appearance-none text-[12px] text-[#333] outline-none">
            <option>42.3%</option>
          </select>
          <Chevron className="-mr-px text-[#666]" />
        </div>
      </div>
    </div>
  )
}

/* ---------- taskbar ---------- */

function Tile({ fill, color, text }: { fill: string; color: string; text: string }) {
  return (
    <>
      <rect x="1" y="1" width="22" height="22" rx="4" fill={fill} />
      <text x="12" y="16.500" textAnchor="middle" fontFamily="Open Sans, sans-serif" fontSize="12" fontWeight="700" fill={color}>{text}</text>
    </>
  )
}

const APPS: { name: string; open?: boolean; active?: boolean; icon: ReactNode }[] = [
  { name: 'Photoshop', icon: <Tile fill="#001e36" color="#31a8ff" text="Ps" /> },
  {
    name: 'File Explorer',
    open: true,
    icon: (
      <>
        <path d="M1 3h8l2 2h11v16H1z" fill="#e8a826" />
        <path d="M1 7h22v14H1z" fill="#fcd462" />
        <path d="M5 13h14v9h-3v-4H8v4H5z" fill="#3f97dc" />
      </>
    ),
  },
  {
    name: 'Mail',
    icon: (
      <>
        <path d="M0 9l12-8 12 8v14H0z" fill="#1067b8" />
        <path d="M0 9h24l-12 8z" fill="#fff" />
        <path d="M0 9l12 7 12-7v14H0z" fill="#2aa5ee" />
        <path d="M0 23l24-14v14z" fill="#1b88da" />
      </>
    ),
  },
  {
    name: 'Instagram',
    icon: (
      <>
        <defs>
          <linearGradient id="insta" x1="0" y1="1" x2="1" y2="0">
            <stop stopColor="#fdc04e" />
            <stop offset=".45" stopColor="#ee2f56" />
            <stop offset="1" stopColor="#6b3bd6" />
          </linearGradient>
        </defs>
        <rect width="24" height="24" rx="5" fill="url(#insta)" />
        <rect x="4.500" y="4.500" width="15" height="15" rx="4" stroke="#fff" strokeWidth="1.800" />
        <circle cx="12" cy="12" r="3.600" stroke="#fff" strokeWidth="1.800" />
        <circle cx="16.500" cy="7.500" r="1" fill="#fff" />
      </>
    ),
  },
  {
    name: 'Store',
    icon: (
      <>
        <path d="M7 6V1.500h10V6" stroke="#fff" strokeWidth="1.500" />
        <path d="M1 6h22v17H1z" fill="#fff" />
        <path d="M7 10h4.500v4.500H7z" fill="#f25022" />
        <path d="M12.500 10H17v4.500h-4.500z" fill="#7fba00" />
        <path d="M7 15.500h4.500V20H7z" fill="#00a4ef" />
        <path d="M12.500 15.500H17V20h-4.500z" fill="#ffb900" />
      </>
    ),
  },
  { name: 'Adobe XD', open: true, active: true, icon: <Tile fill="#470137" color="#ff61f6" text="Xd" /> },
  {
    name: 'Skype',
    icon: (
      <>
        <circle cx="8" cy="8" r="7" fill="#00aff0" />
        <circle cx="16" cy="16" r="7" fill="#0a8fdc" />
        <circle cx="12" cy="12" r="10" fill="#04a5ea" />
        <text x="12" y="17.500" textAnchor="middle" fontFamily="Open Sans, sans-serif" fontSize="15" fontWeight="700" fill="#fff">S</text>
      </>
    ),
  },
  { name: 'Illustrator', icon: <Tile fill="#330000" color="#ff9a00" text="Ai" /> },
  {
    name: 'Word',
    open: true,
    icon: (
      <>
        <path d="M12 3h11v18H12z" fill="#fff" stroke="#2b579a" />
        <path d="M13 6h8M13 9h8M13 12h8M13 15h8M13 18h8" stroke="#2b579a" />
        <path d="M0 3.500L14 1v22L0 20.500z" fill="#2b579a" />
        <text x="7" y="16" textAnchor="middle" fontFamily="Open Sans, sans-serif" fontSize="11" fontWeight="700" fill="#fff">W</text>
      </>
    ),
  },
  {
    name: 'Chrome',
    open: true,
    icon: (
      <>
        <circle cx="12" cy="12" r="11" fill="#fbc116" />
        <path d="M12 12L2.500 6.500a11 11 0 0 1 19 0z" fill="#e33b2e" />
        <path d="M12 12L2.500 6.500A11 11 0 0 0 11.500 23L17 14z" fill="#2da94f" />
        <path d="M12 6.500h9.500a11 11 0 0 0-19 0L7 14z" fill="#e33b2e" />
        <circle cx="12" cy="12" r="5.300" fill="#fff" />
        <circle cx="12" cy="12" r="4.200" fill="#4285f4" />
      </>
    ),
  },
  {
    name: 'Photos',
    open: true,
    icon: (
      <>
        <path d="M1 1h22v22H1z" fill="#1478d4" />
        <path d="M1 20L9 8l10 15H1z" fill="#0b3c78" />
        <path d="M10 23l7-9 6 7v2z" fill="#5eb2f2" />
        <circle cx="18" cy="6" r="2" fill="#fff" />
      </>
    ),
  },
]

function Taskbar() {
  return (
    <footer className="flex h-10 shrink-0 bg-linear-to-r from-[#2e241d] via-[#2b2a2a] to-[#202226] text-white">
      <button aria-label="Start" className="flex w-12 shrink-0 items-center justify-center">
        <Svg size={16} box={16}><path d="M0 2.300L6.800 1.300v6.200H0zM7.600 1.200L16 0v7.500H7.600zM0 8.300h6.800v6.300L0 13.600zM7.600 8.300H16V16l-8.400-1.200z" fill="#fff" /></Svg>
      </button>
      <label className="flex w-[344px] shrink-0 items-center gap-3 border border-[#c4c4c4] bg-[#f2f2f2] pl-[11px] text-[#111]">
        <Svg size={16} box={16}>
          <circle cx="10" cy="6" r="5.200" stroke="#222" strokeWidth="1.300" />
          <path d="M6.300 9.700L.5 15.500" stroke="#222" strokeWidth="1.300" />
        </Svg>
        <input aria-label="Type here to search" placeholder="Type here to search" className="min-w-0 flex-1 text-[14px] outline-none placeholder:text-[#333]" />
      </label>
      <button aria-label="Cortana" className="flex w-12 shrink-0 items-center justify-center">
        <Svg size={16} box={16}><circle cx="8" cy="8" r="6.800" stroke="#fff" strokeWidth="2" /></Svg>
      </button>
      <button aria-label="Task View" className="flex w-[50px] shrink-0 items-center justify-center pr-[2px]">
        <Svg size={16} box={16}><path d="M.5 0v2.500h10V0M.5 16v-2.500h10V16M.5 5h10v6H.5zM14.500 0v16M13 6.500h3" stroke="#fff" strokeWidth="1.200" /></Svg>
      </button>
      <div className="grid w-[479px] shrink-0 grid-cols-11">
        {APPS.map((a) => (
          <button key={a.name} aria-label={a.name} className={`flex flex-col items-center ${a.active ? 'bg-[#565453]' : ''}`}>
            <span className="flex h-[38px] items-center pt-[2px]">
              <Svg>{a.icon}</Svg>
            </span>
            <span className={`h-[2px] ${a.active ? 'w-full' : 'w-[35px]'} ${a.open ? 'bg-[#76b9ed]' : ''}`} />
          </button>
        ))}
      </div>
      <div className="flex flex-1 items-center justify-end whitespace-nowrap">
        <button className="flex items-center gap-[10px] text-[14px]">
          <Svg size={20} box={20}>
            <circle cx="10" cy="8.500" r="8" fill="#fbb52a" />
            <path d="M6 18.500a3.500 3.500 0 0 1 .5-6.800 4.500 4.500 0 0 1 8-.2 3.500 3.500 0 0 1 2 7z" fill="#e6e1dc" />
          </Svg>
          22°C
        </button>
        <button aria-label="Show hidden icons" className="ml-[17px]">
          <Svg size={12} box={12}><path d="M1 8.500l5-5 5 5" stroke="#fff" strokeWidth="1.300" /></Svg>
        </button>
        <svg width="16" height="10" viewBox="0 0 16 10" className="ml-[10px]" aria-hidden="true"><path d="M3 10a3 3 0 0 1 0-6 4 4 0 0 1 7-1.500A3 3 0 0 1 13 4a3 3 0 0 1 0 6z" fill="#f0f0f0" /></svg>
        <svg width="16" height="16" viewBox="0 0 16 16" fill="none" stroke="#aaa" className="ml-2" aria-hidden="true">
          <path d="M2 14A12 12 0 0 1 14 3M5 14a9 9 0 0 1 9-8" />
          <path d="M8 14a6 6 0 0 1 6-5M11 14a3 3 0 0 1 3-2" stroke="#fff" strokeWidth="1.500" />
        </svg>
        <svg width="16" height="14" viewBox="0 0 16 14" fill="none" stroke="#fff" strokeWidth="1.100" className="ml-[6px]" aria-hidden="true">
          <path d="M1 5h2.500L7 2v10L3.500 9H1zM9 5q1.500 2 0 4M11 3.500q3 3.500 0 7M13 2q4.500 5 0 10" />
        </svg>
        <div className="ml-[6px] w-[60px] text-center text-[11px] leading-[18px]">
          <div>6:36 AM</div>
          <div>10/14/2021</div>
        </div>
        <button aria-label="3 new notifications" className="ml-[14px] mr-3">
          <svg width="26" height="26" viewBox="0 0 26 26" aria-hidden="true">
            <path d="M2 4h16v13h-8l-4 4v-4H2z" fill="#fff" />
            <path d="M5 7.500h10M5 10.500h10M5 13.500h7" stroke="#26282b" />
            <circle cx="17.500" cy="17.500" r="7.500" fill="#3c3e41" stroke="#888" />
            <text x="17.500" y="21.500" textAnchor="middle" fontFamily="Open Sans, sans-serif" fontSize="11" fill="#fff">3</text>
          </svg>
        </button>
        <div className="mr-[2px] h-full w-px bg-[#555]" />
      </div>
    </footer>
  )
}

export default function App() {
  return (
    <div className="flex h-screen flex-col overflow-hidden bg-[#e3e3e3] font-['Open_Sans',sans-serif]">
      <TitleBar />
      <Toolbar />
      <div className="flex min-h-0 flex-1">
        <ToolRail />
        <PluginsPanel />
        <Canvas />
        <Inspector />
      </div>
      <Taskbar />
    </div>
  )
}
